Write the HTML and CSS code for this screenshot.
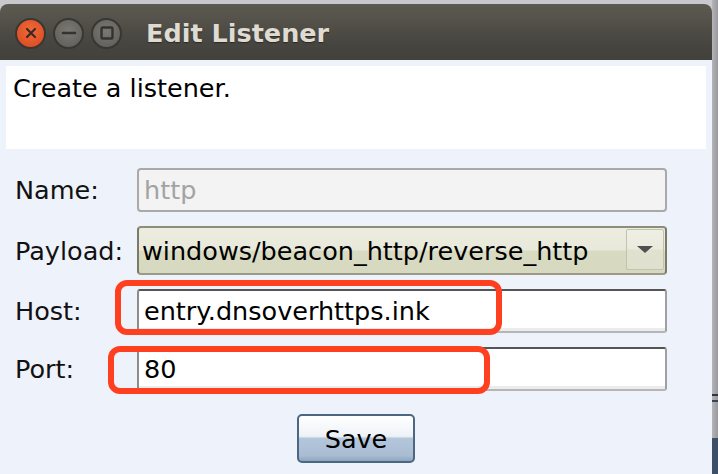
FILE: index.html
```html
<!DOCTYPE html>
<html>
<head>
<meta charset="utf-8">
<link rel="stylesheet" href="styles.css">
</head>
<body>
<div class="screen">
  <div class="window">
    <div class="titlebar">
      <div class="wbtns">
        <span class="wbtn close">
          <svg width="14" height="14" viewBox="0 0 14 14"><path d="M3 3 L11 11 M11 3 L3 11" stroke="#3b2a22" stroke-width="2.2" stroke-linecap="round"/></svg>
        </span>
        <span class="wbtn min">
          <svg width="16" height="16" viewBox="0 0 16 16"><path d="M2 8 H14" stroke="#34332f" stroke-width="2.6" stroke-linecap="round"/></svg>
        </span>
        <span class="wbtn max">
          <svg width="16" height="16" viewBox="0 0 16 16"><rect x="2.5" y="2.5" width="11" height="11" rx="1" fill="none" stroke="#34332f" stroke-width="2.4"/></svg>
        </span>
      </div>
      <div class="title">Edit Listener</div>
    </div>
    <div class="content">
      <div class="desc">Create a listener.</div>
      <div class="form">
        <div class="label">Name:</div>
        <div class="field field-name">http</div>
        <div class="label">Payload:</div>
        <div class="combo">
          <div class="combo-text">windows/beacon_http/reverse_http</div>
          <div class="combo-btn"><span class="tri"></span></div>
        </div>
        <div class="label">Host:</div>
        <div class="field field-edit">entry.dnsoverhttps.ink</div>
        <div class="label">Port:</div>
        <div class="field field-edit">80</div>
      </div>
      <div class="actions">
        <div class="btn">Save</div>
      </div>
      <div class="mark mark-host"></div>
      <div class="mark mark-port"></div>
    </div>
  </div>
  <div class="edge">
    <div class="edge-top"></div>
    <div class="edge-line"></div>
    <div class="edge-line2"></div>
    <div class="edge-bottom"></div>
  </div>
</div>
</body>
</html>
```
FILE: styles.css
```css
* { box-sizing: border-box; }
html, body { margin: 0; padding: 0; }
body {
  width: 718px;
  height: 474px;
  overflow: hidden;
  font-family: "DejaVu Sans", "Liberation Sans", sans-serif;
}
.screen {
  display: flex;
  width: 718px;
  height: 474px;
  background: #c9c9cd;
  padding-top: 4px;
}
.window {
  width: 712px;
  display: flex;
  flex-direction: column;
}
.titlebar {
  height: 56px;
  flex: none;
  display: flex;
  align-items: center;
  background: linear-gradient(#5d5a51, #47453f 70%, #43413b);
  border-radius: 8px 8px 0 0;
  padding-left: 15px;
}
.wbtns {
  display: flex;
  gap: 7px;
  margin-top: 2px;
}
.wbtn {
  width: 31px;
  height: 31px;
  border-radius: 50%;
  display: flex;
  align-items: center;
  justify-content: center;
  border: 2px solid #383733;
}
.close { background: radial-gradient(circle at 50% 40%, #f06a3a, #df4f24 75%); }
.min, .max { background: radial-gradient(circle at 50% 40%, #7a7974, #63625d 75%); }
.title {
  margin-left: 24px;
  margin-top: 2px;
  color: #dfdbd2;
  font-weight: bold;
  font-size: 25.5px;
  text-shadow: 0 1px 1px #2a2925;
}
.content {
  position: relative;
  flex: 1;
  background: #eef2fa;
  padding: 6px 6px 0 6px;
}
.desc {
  height: 83px;
  background: #ffffff;
  padding: 7px 7px;
  font-size: 25.5px;
  color: #000;
}
.form {
  margin-top: 19px;
  padding-left: 9px;
  display: grid;
  grid-template-columns: 122px 530px;
  row-gap: 14px;
  align-items: center;
}
.label {
  font-size: 25.5px;
  color: #111;
}
.field {
  height: 44px;
  font-size: 25.5px;
  display: flex;
  align-items: center;
  padding-left: 5px;
  border-radius: 4px;
}
.field-name {
  background: #f3f3f3;
  border: 2px solid #a9a9a9;
  color: #a3a3a3;
}
.field-edit {
  background: #ffffff;
  border: 2px solid;
  border-color: #555555 #a0a0a0 #b5b5b5 #8c8c8c;
  border-radius: 3px;
  color: #000;
  box-shadow: inset 0 -3px 0 #ececec;
}
.combo {
  height: 49px;
  display: flex;
  border: 2px solid;
  border-color: #8d8d78 #7a7a66 #9a9a86 #7a7a66;
  border-radius: 4px;
  background: linear-gradient(#ecede0, #e8e9da 48%, #d8dbc2 52%, #d6d9c0);
}
.combo-text {
  flex: 1;
  font-size: 25.5px;
  display: flex;
  align-items: center;
  padding-left: 3px;
  color: #000;
}
.combo-btn {
  width: 38px;
  margin: 1px 1px 3px 0;
  border: 1px solid #c2c3ae;
  border-radius: 2px;
  background: linear-gradient(#eff0e4, #eaebdd 48%, #e0e1cf 52%, #dfe0cd);
  display: flex;
  align-items: center;
  justify-content: center;
}
.tri {
  width: 0;
  height: 0;
  border-left: 8px solid transparent;
  border-right: 8px solid transparent;
  border-top: 7px solid #505050;
}
.actions {
  display: flex;
  justify-content: center;
  margin-top: 23px;
}
.btn {
  width: 118px;
  height: 49px;
  border: 2px solid #4d6783;
  border-radius: 5px;
  background: linear-gradient(#ffffff, #eef2f7 45%, #b4c6da 50%, #a9bcd2 88%, #8ea6c0);
  font-size: 25.5px;
  display: flex;
  align-items: center;
  justify-content: center;
  color: #000;
}
.mark {
  position: absolute;
  border: 6px solid #ff4020;
  border-radius: 12px;
}
.mark-host { left: 115px; top: 220px; width: 387px; height: 55px; }
.mark-port { left: 108px; top: 286px; width: 382px; height: 48px; }
.edge {
  width: 6px;
  display: flex;
  flex-direction: column;
  background: linear-gradient(90deg, #b5b5b9, #98989c);
  margin-top: -4px;
}
.edge-top { height: 394px; }
.edge-line { height: 2px; background: #2b3440; }
.edge-line2 { height: 2px; margin-top: 4px; background: #3a4450; }
.edge-bottom { flex: 1; margin-top: 36px; background: #3d4f66; }
```
